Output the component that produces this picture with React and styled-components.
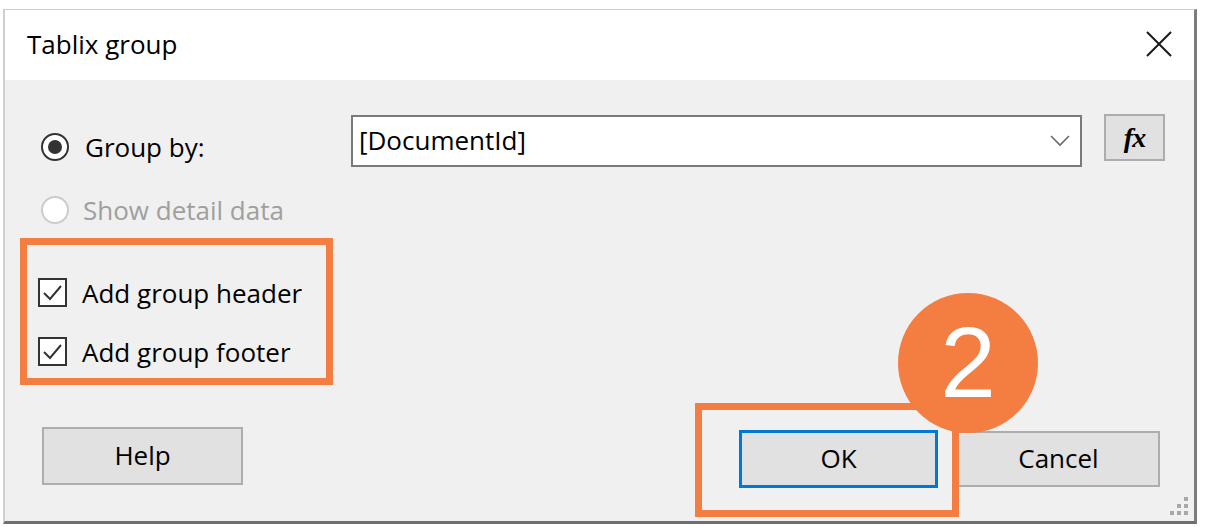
import React from "react";
import styled, { createGlobalStyle } from "styled-components";

const GlobalStyle = createGlobalStyle`
	html, body {
		margin: 0;
		padding: 0;
		background: #ffffff;
	}
	body {
		font-family: "Open Sans", "Noto Sans", sans-serif;
	}
`;

const ACCENT = "#f47d42";

const Window = styled.div`
	position: relative;
	box-sizing: content-box;
	width: 1189px;
	height: 511px;
	margin: 9px 0 0 3px;
	border-top: 1px solid #cfcfcf;
	border-left: 2px solid #cfcfcf;
	border-right: 3px solid #7c7c7c;
	border-bottom: 3px solid #6e6e6e;
	display: flex;
	flex-direction: column;
	font-size: 26px;
	color: #000;
`;

const TitleBar = styled.div`
	height: 70px;
	background: #ffffff;
	display: flex;
	align-items: center;
	justify-content: space-between;
	padding: 0 22px 0 22px;
`;

const Title = styled.div`
	font-size: 26px;
	line-height: 1;
	margin-top: -2px;
`;

const CloseBtn = styled.div`
	width: 26px;
	height: 26px;
	display: flex;
	margin-top: -2px;
`;

const Body = styled.div`
	flex: 1;
	background: #f0f0f0;
	padding: 34px 0 0 15px;
	display: flex;
	flex-direction: column;
`;

const GroupRow = styled.div`
	display: flex;
	align-items: flex-start;
	height: 53px;
`;

const OptionCell = styled.div`
	display: flex;
	align-items: center;
	flex-shrink: 0;
	width: 310px;
	margin-left: 21px;
	margin-top: 18px;
	height: 30px;
`;

const Radio = styled.span`
	box-sizing: border-box;
	width: 28px;
	height: 28px;
	border-radius: 50%;
	border: 2px solid ${(p) => (p.$disabled ? "#cccccc" : "#333333")};
	background: #ffffff;
	display: flex;
	align-items: center;
	justify-content: center;
	flex-shrink: 0;
	&::after {
		content: "";
		width: 14px;
		height: 14px;
		border-radius: 50%;
		background: #333333;
		display: ${(p) => (p.$checked ? "block" : "none")};
	}
`;

const Label = styled.span`
	margin-left: ${(p) => p.$gap || 14}px;
	color: ${(p) => (p.$disabled ? "#9f9f9f" : "#000000")};
	white-space: nowrap;
	line-height: 1;
`;

const Combo = styled.div`
	box-sizing: border-box;
	flex-shrink: 0;
	width: 731px;
	height: 52px;
	margin-top: 1px;
	background: #ffffff;
	border: 2px solid #7a7a7a;
	display: flex;
	align-items: center;
	justify-content: space-between;
	padding: 0 10px 0 6px;
`;

const ComboText = styled.span`
	line-height: 1;
	margin-top: -2px;
`;

const FxButton = styled.div`
	box-sizing: border-box;
	flex-shrink: 0;
	width: 61px;
	height: 47px;
	margin-left: 22px;
	background: #e1e1e1;
	border: 2px solid #adadad;
	display: flex;
	align-items: center;
	justify-content: center;
	font-family: "Liberation Serif", "DejaVu Serif", serif;
	font-weight: bold;
	font-style: italic;
	font-size: 28px;
	letter-spacing: -1px;
`;

const OptionRow = styled.div`
	display: flex;
	align-items: center;
	height: 30px;
	margin: ${(p) => p.$margin || "0"};
`;

const Highlight = styled.div`
	position: relative;
	z-index: 1;
	box-sizing: border-box;
	flex-shrink: 0;
	border: 7px solid ${ACCENT};
	width: ${(p) => p.$width}px;
	height: ${(p) => p.$height}px;
	padding: ${(p) => p.$padding};
	margin: ${(p) => p.$margin || "0"};
	display: flex;
	flex-direction: ${(p) => p.$dir || "row"};
`;

const CheckRow = styled.div`
	display: flex;
	align-items: center;
	height: 30px;
	margin-bottom: 30px;
`;

const CheckBox = styled.span`
	box-sizing: border-box;
	width: 29px;
	height: 29px;
	border: 2px solid #333333;
	background: #ffffff;
	display: flex;
	align-items: center;
	justify-content: center;
	flex-shrink: 0;
`;

const Footer = styled.div`
	display: flex;
	align-items: flex-start;
	margin-top: 18px;
	padding-right: 34px;
`;

const Button = styled.div`
	box-sizing: border-box;
	flex-shrink: 0;
	width: ${(p) => p.$width || 201}px;
	height: ${(p) => p.$height || 58}px;
	margin: ${(p) => p.$margin || "0"};
	background: #e1e1e1;
	border: ${(p) => (p.$default ? "3px solid #0078d7" : "2px solid #adadad")};
	display: flex;
	align-items: center;
	justify-content: center;
	line-height: 1;
	padding-bottom: 3px;
`;

const Spacer = styled.div`
	flex: 1;
`;

const StepBadge = styled.div`
	position: absolute;
	left: 196px;
	top: -117px;
	width: 140px;
	height: 140px;
	border-radius: 50%;
	background: ${ACCENT};
	color: #ffffff;
	display: flex;
	align-items: center;
	justify-content: center;
	font-family: "Liberation Sans", Arial, sans-serif;
	font-size: 100px;
	line-height: 1;
	padding-bottom: 2px;
	box-sizing: border-box;
`;

const Grip = styled.svg`
	position: absolute;
	right: 6px;
	bottom: 6px;
`;

const Check = () => (
	<svg width="21" height="17" viewBox="0 0 21 17">
		<path d="M2 9 L8 15 L19 2" fill="none" stroke="#333" strokeWidth="2" />
	</svg>
);

const App = () => {
	return (
		<>
			<GlobalStyle />
			<Window>
				<TitleBar>
					<Title>Tablix group</Title>
					<CloseBtn>
						<svg width="26" height="26" viewBox="0 0 26 26">
							<path d="M1 1 L25 25 M25 1 L1 25" stroke="#1a1a1a" strokeWidth="2" />
						</svg>
					</CloseBtn>
				</TitleBar>
				<Body>
					<GroupRow>
						<OptionCell>
							<Radio $checked />
							<Label $gap={16}>Group by:</Label>
						</OptionCell>
						<Combo>
							<ComboText>[DocumentId]</ComboText>
							<svg width="20" height="12" viewBox="0 0 20 12">
								<path d="M1 1 L10 10 L19 1" fill="none" stroke="#6a6a6a" strokeWidth="1.6" />
							</svg>
						</Combo>
						<FxButton>fx</FxButton>
					</GroupRow>
					<OptionRow $margin="28px 0 0 21px">
						<Radio $disabled />
						<Label $disabled>Show detail data</Label>
					</OptionRow>
					<Highlight $width={313} $height={147} $padding="33px 0 0 11px" $dir="column" $margin="13px 0 0 0">
						<CheckRow>
							<CheckBox>
								<Check />
							</CheckBox>
							<Label $gap={15}>Add group header</Label>
						</CheckRow>
						<CheckRow>
							<CheckBox>
								<Check />
							</CheckBox>
							<Label $gap={15}>Add group footer</Label>
						</CheckRow>
					</Highlight>
					<Footer>
						<Button $margin="24px 0 0 22px">Help</Button>
						<Spacer />
						<Highlight $width={264} $height={114} $padding="20px 0 0 37px">
							<Button $default $width={199}>OK</Button>
							<StepBadge>2</StepBadge>
						</Highlight>
						<Button $width={203} $height={56} $margin="28px 0 0 -2px">Cancel</Button>
					</Footer>
				</Body>
				<Grip width="18" height="18" viewBox="0 0 18 18">
					<g fill="#a8a8a8">
						<rect x="14" y="0" width="4" height="4" />
						<rect x="7" y="7" width="4" height="4" />
						<rect x="14" y="7" width="4" height="4" />
						<rect x="0" y="14" width="4" height="4" />
						<rect x="7" y="14" width="4" height="4" />
						<rect x="14" y="14" width="4" height="4" />
					</g>
				</Grip>
			</Window>
		</>
	);
};

export default App;
